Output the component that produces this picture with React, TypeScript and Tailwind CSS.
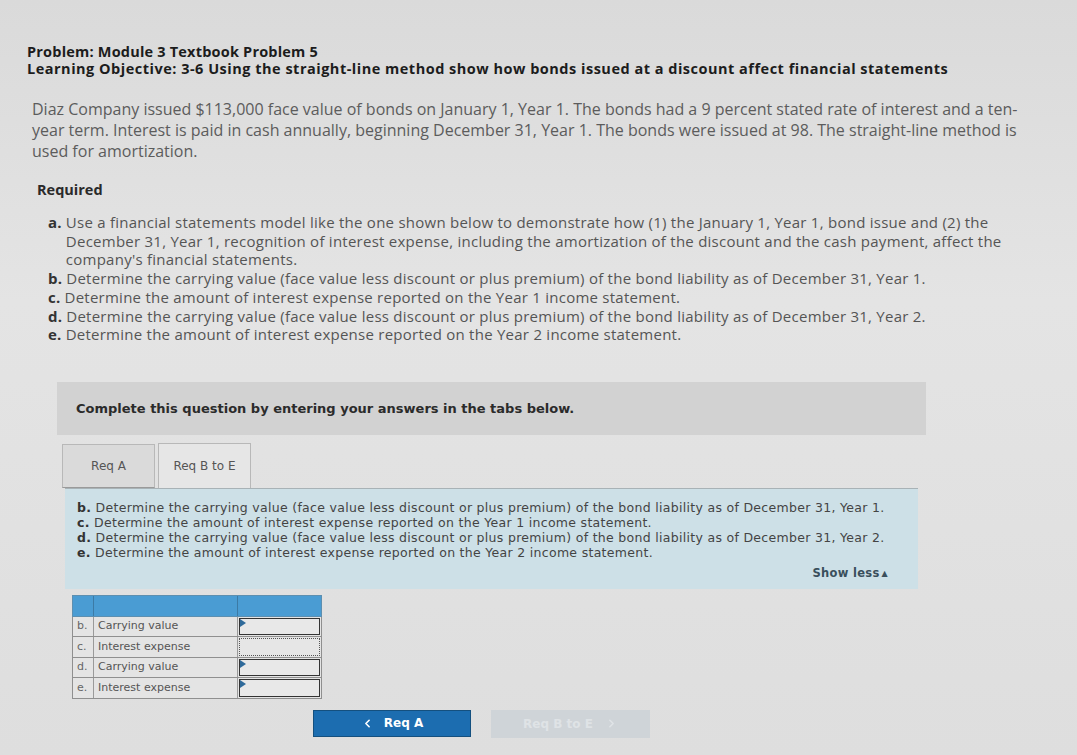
import { ChevronLeft, ChevronRight } from "lucide-react";

const requirements = [
  {
    letter: "a.",
    text: "Use a financial statements model like the one shown below to demonstrate how (1) the January 1, Year 1, bond issue and (2) the December 31, Year 1, recognition of interest expense, including the amortization of the discount and the cash payment, affect the company's financial statements.",
  },
  {
    letter: "b.",
    text: "Determine the carrying value (face value less discount or plus premium) of the bond liability as of December 31, Year 1.",
  },
  {
    letter: "c.",
    text: "Determine the amount of interest expense reported on the Year 1 income statement.",
  },
  {
    letter: "d.",
    text: "Determine the carrying value (face value less discount or plus premium) of the bond liability as of December 31, Year 2.",
  },
  {
    letter: "e.",
    text: "Determine the amount of interest expense reported on the Year 2 income statement.",
  },
];

const rows = [
  { letter: "b.", label: "Carrying value", dotted: false },
  { letter: "c.", label: "Interest expense", dotted: true },
  { letter: "d.", label: "Carrying value", dotted: false },
  { letter: "e.", label: "Interest expense", dotted: false },
];

const App = () => {
  return (
    <div className="min-h-screen w-full bg-[linear-gradient(180deg,#dadada_0%,#e4e4e4_40%,#dedede_100%)] font-['Open_Sans',sans-serif] overflow-hidden">
      <div className="pl-[27px] pt-[43px] pr-[30px]">
        <h1 className="text-[14.5px] leading-[17px] font-bold text-[#1c1c1c] tracking-[0.2px]">
          Problem: Module 3 Textbook Problem 5
        </h1>
        <h2 className="text-[14.5px] leading-[17px] font-bold text-[#1c1c1c] tracking-[0.5px]">
          Learning Objective: 3-6 Using the straight-line method show how bonds issued at a discount affect financial
          statements
        </h2>

        <p className="mt-[22px] ml-[5px] w-[995px] text-[16px] leading-[21px] text-[#5c5c5c]">
          Diaz Company issued $113,000 face value of bonds on January 1, Year 1. The bonds had a 9 percent stated rate of
          interest and a ten-year term. Interest is paid in cash annually, beginning December 31, Year 1. The bonds were
          issued at 98. The straight-line method is used for amortization.
        </p>

        <h3 className="mt-[19px] ml-[10px] text-[14.5px] leading-[18px] font-bold text-[#2a2a2a]">Required</h3>

        <ul className="mt-[14px] ml-[21px] w-[960px] text-[15px] leading-[18.7px] tracking-[0.25px] text-[#555]">
          {requirements.map((r) => (
            <li key={r.letter} className="flex">
              <span className="shrink-0 mr-[4px] font-bold text-[#333]">{r.letter}</span>
              <span>{r.text}</span>
            </li>
          ))}
        </ul>
      </div>

      <div className="ml-[57px] mt-[38px] w-[869px] font-['DejaVu_Sans',sans-serif]">
        <div className="h-[53px] bg-[#d2d2d2] flex items-center pl-[19px] text-[13px] font-bold text-[#2b2b2b]">
          Complete this question by entering your answers in the tabs below.
        </div>

        <div className="mt-[8px] ml-[5px] flex items-end gap-[3px]">
          <div className="w-[93px] h-[44px] bg-[#dadada] border border-[#b8b8b8] border-b-[#9a9a9a] flex items-center justify-center text-[12px] text-[#555]">
            Req A
          </div>
          <div className="w-[93px] h-[45px] bg-[#e6e6e6] border border-b-0 border-[#b8b8b8] flex items-center justify-center text-[12px] text-[#555]">
            Req B to E
          </div>
        </div>

        <div className="ml-[8px] w-[853px] h-[101px] bg-[#cde0e7] border-t border-[#a8b2b6] px-[12px] pt-[11px] text-[12.5px] leading-[15px] text-[#444] tracking-[0.3px] relative">
          {requirements.slice(1).map((r) => (
            <div key={r.letter}>
              <span className="font-bold text-[#333]">{r.letter}</span> {r.text}
            </div>
          ))}
          <div className="absolute right-[30px] bottom-[8px] flex items-center gap-[2px] text-[11.5px] font-bold text-[#3a4f5c]">
            Show less
            <span className="text-[8px]">▲</span>
          </div>
        </div>

        <div className="ml-[15px] mt-[6px] w-[250px] text-[11px] text-[#555]">
          <div className="flex h-[22px] bg-[#4a9cd3] border border-[#5d8fb0]">
            <div className="w-[21px] border-r border-[#3c7aa5]" />
            <div className="w-[144px] border-r border-[#3c7aa5]" />
            <div className="flex-1" />
          </div>
          {rows.map((r) => (
            <div key={r.letter} className="flex h-[20.5px] bg-[#e4e4e4] border-x border-b border-[#8f8f8f]">
              <div className="w-[21px] border-r border-[#9a9a9a] flex items-center pl-[4px] text-[#666]">{r.letter}</div>
              <div className="w-[144px] border-r border-[#9a9a9a] flex items-center pl-[4px] text-[#555]">{r.label}</div>
              <div className="flex-1 p-[1px]">
                <div
                  className={
                    r.dotted
                      ? "relative h-full border border-dotted border-[#555] bg-[#e6e6e6]"
                      : "relative h-full border border-[#333] bg-[#e8e8e8]"
                  }
                >
                  {!r.dotted && (
                    <span className="absolute left-0 top-0 w-0 h-0 border-t-[4px] border-b-[4px] border-l-[6px] border-t-transparent border-b-transparent border-l-[#2f6a9a]" />
                  )}
                </div>
              </div>
            </div>
          ))}
        </div>

        <div className="mt-[11px] ml-[256px] flex gap-[20px]">
          <button className="w-[158px] h-[27px] bg-[#1c6db0] border border-[#14507f] flex items-center justify-center gap-[10px] text-[12px] font-bold text-white">
            <ChevronLeft className="w-[13px] h-[13px]" strokeWidth={3} />
            Req A
          </button>
          <button className="w-[159px] h-[28px] bg-[#cfd4d8] flex items-center justify-center gap-[12px] text-[12px] font-bold text-[#dfe3e6]">
            Req B to E
            <ChevronRight className="w-[13px] h-[13px]" strokeWidth={3} />
          </button>
        </div>
      </div>
    </div>
  );
};

export default App;
